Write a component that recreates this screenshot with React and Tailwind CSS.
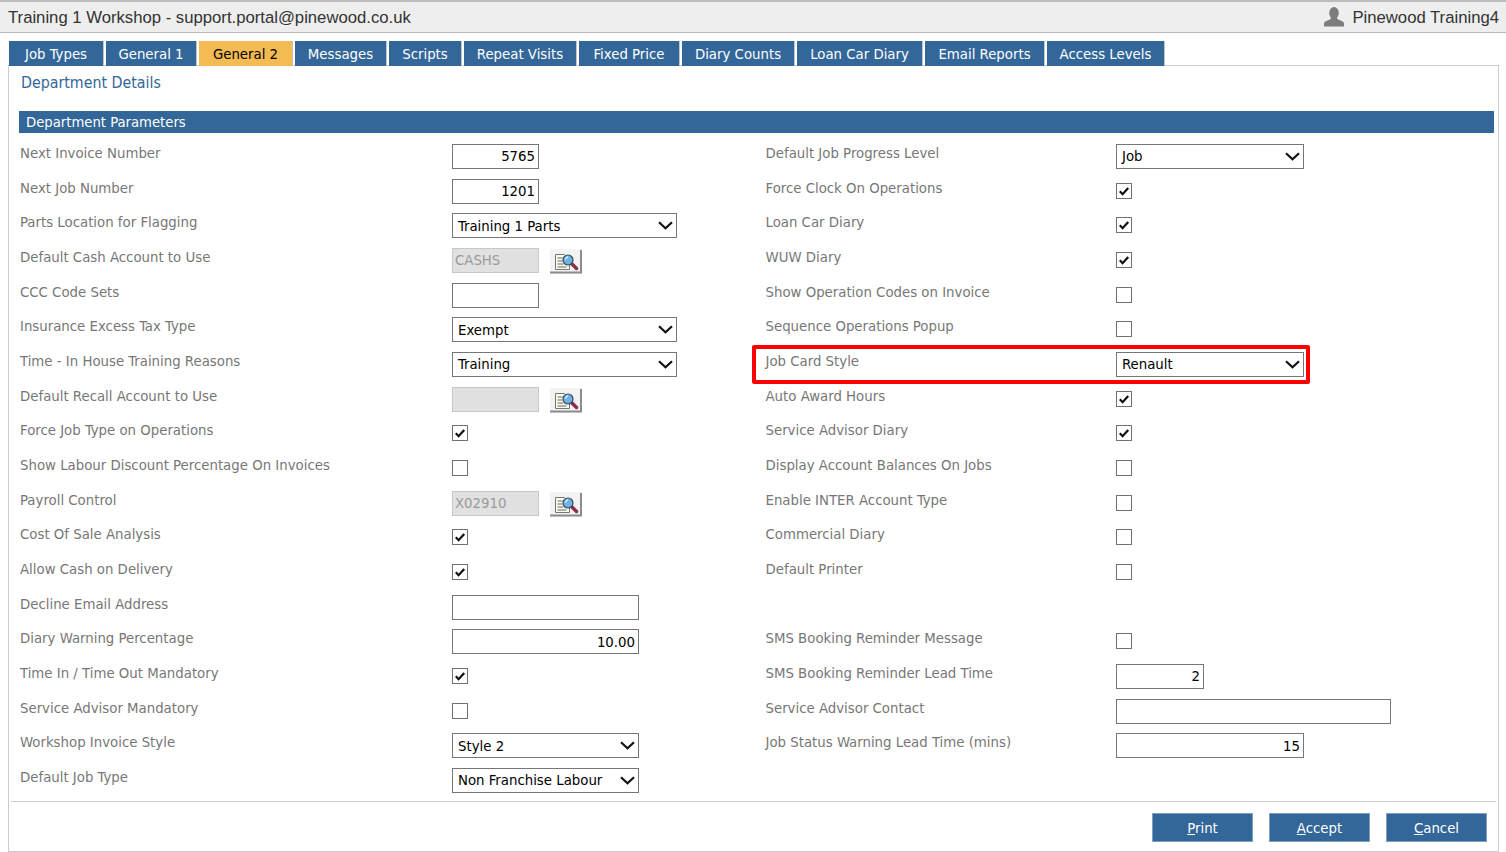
const FONT = "font-['DejaVu_Sans',sans-serif] font-stretch-condensed";

const tabs = [
  ["Job Types", "w-[95px]"],
  ["General 1", "w-[91px]"],
  ["General 2", "w-[94px]", true],
  ["Messages", "w-[92px]"],
  ["Scripts", "w-[73px]"],
  ["Repeat Visits", "w-[113px]"],
  ["Fixed Price", "w-[101px]"],
  ["Diary Counts", "w-[113px]"],
  ["Loan Car Diary", "w-[126px]"],
  ["Email Reports", "w-[120px]"],
  ["Access Levels", "w-[118px]"],
];

const rows = [
  [["Next Invoice Number", "num", "5765", "w-[87px]"], ["Default Job Progress Level", "sel", "Job", "w-[188px]"]],
  [["Next Job Number", "num", "1201", "w-[87px]"], ["Force Clock On Operations", "chk", true]],
  [["Parts Location for Flagging", "sel", "Training 1 Parts", "w-[225px]"], ["Loan Car Diary", "chk", true]],
  [["Default Cash Account to Use", "look", "CASHS"], ["WUW Diary", "chk", true]],
  [["CCC Code Sets", "num", "", "w-[87px]"], ["Show Operation Codes on Invoice", "chk", false]],
  [["Insurance Excess Tax Type", "sel", "Exempt", "w-[225px]"], ["Sequence Operations Popup", "chk", false]],
  [["Time - In House Training Reasons", "sel", "Training", "w-[225px]"], ["Job Card Style", "sel", "Renault", "w-[188px]"]],
  [["Default Recall Account to Use", "look", ""], ["Auto Award Hours", "chk", true]],
  [["Force Job Type on Operations", "chk", true], ["Service Advisor Diary", "chk", true]],
  [["Show Labour Discount Percentage On Invoices", "chk", false], ["Display Account Balances On Jobs", "chk", false]],
  [["Payroll Control", "look", "X02910"], ["Enable INTER Account Type", "chk", false]],
  [["Cost Of Sale Analysis", "chk", true], ["Commercial Diary", "chk", false]],
  [["Allow Cash on Delivery", "chk", true], ["Default Printer", "chk", false]],
  [["Decline Email Address", "num", "", "w-[187px]"], null],
  [["Diary Warning Percentage", "num", "10.00", "w-[187px]"], ["SMS Booking Reminder Message", "chk", false]],
  [["Time In / Time Out Mandatory", "chk", true], ["SMS Booking Reminder Lead Time", "num", "2", "w-[88px]"]],
  [["Service Advisor Mandatory", "chk", false], ["Service Advisor Contact", "num", "", "w-[275px]"]],
  [["Workshop Invoice Style", "sel", "Style 2", "w-[187px]"], ["Job Status Warning Lead Time (mins)", "num", "15", "w-[188px]"]],
  [["Default Job Type", "sel", "Non Franchise Labour", "w-[187px]"], null],
];

function LookupIcon() {
  return (
    <svg width="32" height="25" viewBox="0 0 32 25">
      <path d="M0 0h32v25H0z" fill="#f3f3f3" />
      <path d="M0 23.500h31V1" stroke="#8c8c8c" strokeWidth="2" fill="none" />
      <path d="M5.500 5.500h9l5 5v10h-14z" fill="#fbfbee" stroke="#777" />
      <path d="M7.500 9h5M7.500 12h5M7.500 15h6M7.500 18h9" stroke="#666" strokeWidth="1" />
      <path d="M22 15l4.500 4.500" stroke="#8a2f4a" strokeWidth="3.500" strokeLinecap="round" />
      <circle cx="18" cy="11" r="5" fill="#6fb2e6" stroke="#3a4a5c" strokeWidth="1.200" />
      <path d="M15.500 10.500a3 3 0 0 1 2.500-2.500" stroke="#dff2ff" strokeWidth="1.400" fill="none" />
    </svg>
  );
}

function Control({ type, value, width }) {
  if (type === "num") {
    return (
      <div className={`h-[25px] ${width} border border-[#767676] bg-white flex items-center justify-end pr-[3px] text-[14.8px] text-black`}>
        {value}
      </div>
    );
  }
  if (type === "sel") {
    return (
      <div className={`h-[25px] ${width} border border-[#767676] bg-white flex items-center justify-between pl-[5px] pr-[3px] text-[14.8px] text-black`}>
        <span>{value}</span>
        <svg width="15" height="9" viewBox="0 0 15 9" fill="none">
          <path d="M1 1.200l6.500 6 6.500-6" stroke="#111" strokeWidth="2.200" />
        </svg>
      </div>
    );
  }
  if (type === "chk") {
    return (
      <div className="mt-[4px] w-[16px] h-[16px] border border-[#707070] bg-white flex items-center justify-center">
        {value && (
          <svg width="12" height="12" viewBox="0 0 12 12" fill="none">
            <path d="M1.800 6.200l2.800 3L10.200 3" stroke="#111" strokeWidth="2.200" />
          </svg>
        )}
      </div>
    );
  }
  return (
    <div className="flex items-start gap-[11px]">
      <div className="h-[25px] w-[87px] border border-[#c8c8c8] bg-[#e1e1e1] flex items-center pl-[2px] text-[14.8px] text-[#9a9a9a]">
        {value}
      </div>
      <div className="mt-[1.500px] h-[25px] w-[32px]">
        <LookupIcon />
      </div>
    </div>
  );
}

function Cell({ item, labelWidth, colWidth }) {
  if (!item) return <div className={colWidth} />;
  return (
    <div className={`flex ${colWidth}`}>
      <div className={`${labelWidth} pt-[1px] text-[14.8px] leading-[16px] text-[#777] whitespace-nowrap`}>{item[0]}</div>
      <Control type={item[1]} value={item[2]} width={item[3]} />
    </div>
  );
}

function Btn({ u, rest }) {
  return (
    <button className="w-[101px] h-[29px] bg-[#336699] border border-[#7f9fc0] text-white text-[14.8px] flex items-center justify-center">
      <span><span className="underline">{u}</span>{rest}</span>
    </button>
  );
}

export default function App() {
  return (
    <div className={`relative w-[1506px] h-[852px] bg-white overflow-hidden ${FONT}`}>
      <header className="h-[33px] bg-[#eeeeee] border-t-2 border-b border-[#bcbcbc] flex items-center justify-between pl-[8px] pr-[7px] font-['Liberation_Sans',sans-serif] font-stretch-normal text-[16.7px] text-[#333]">
        <span className="pt-[2px]">Training 1 Workshop - support.portal@pinewood.co.uk</span>
        <div className="flex items-center gap-[8px]">
          <svg width="20" height="20" viewBox="0 0 20 20" fill="#7d7d7d">
            <ellipse cx="10" cy="6" rx="4.800" ry="6" />
            <path d="M0 19.500v-3c0-2.500 4.500-3 6.500-4.500l1-1.500h5l1 1.500c2 1.500 6.500 2 6.500 4.500v3z" />
          </svg>
          <span className="pt-[2px]">Pinewood Training4</span>
        </div>
      </header>

      <nav className="flex gap-[2px] pl-[9px] pt-[8px] h-[32px]">
        {tabs.map(([t, w, active]) => (
          <div
            key={t}
            className={`${w} h-[25px] shrink-0 pt-[1px] flex items-center justify-center text-[14.8px] border-r border-[#c4c4c4] ${active ? "bg-[#f5bb53] text-black" : "bg-[#336699] text-white"}`}
          >
            {t}
          </div>
        ))}
      </nav>

      <main className="ml-[8px] w-[1491px] h-[787px] border border-[#cccccc]">
        <h1 className="pl-[12px] pt-[7px] h-[45px] text-[15.8px] leading-[20px] text-[#336699]">Department Details</h1>
        <div className="ml-[10px] w-[1475px] h-[22px] bg-[#336699] text-white text-[14.7px] flex items-center pl-[7px]">
          Department Parameters
        </div>
        <div className="ml-[11px] mt-[11px] flex flex-col">
          {rows.map((r, i) => (
            <div key={i} className="flex h-[34.670px]">
              <Cell item={r[0]} labelWidth="w-[432px] shrink-0" colWidth="w-[745.500px] shrink-0" />
              <Cell item={r[1]} labelWidth="w-[350.500px] shrink-0" colWidth="w-[700px] shrink-0" />
            </div>
          ))}
        </div>
        <div className="ml-[2px] w-[1485px] border-t border-[#cccccc] -mt-[1px]" />
        <div className="flex justify-end gap-[16px] pr-[11px] pt-[11px]">
          <Btn u="P" rest="rint" />
          <Btn u="A" rest="ccept" />
          <Btn u="C" rest="ancel" />
        </div>
      </main>

      <div className="absolute left-[752px] top-[345px] w-[558px] h-[39px] border-4 border-[#ff0000] rounded-[2px]" />
    </div>
  );
}
